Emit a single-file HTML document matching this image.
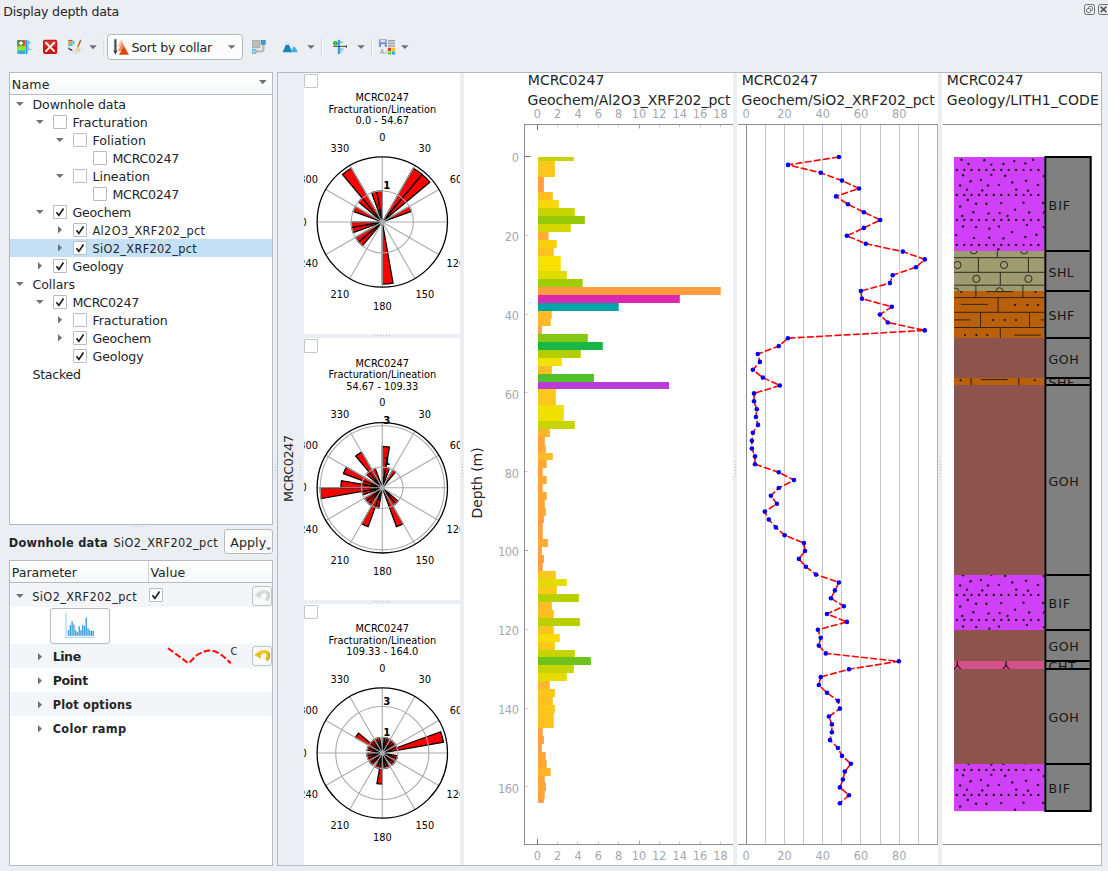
<!DOCTYPE html>
<html lang="en"><head><meta charset="utf-8"><title>Display depth data</title>
<style>
*{box-sizing:border-box;margin:0;padding:0}
html,body{width:1108px;height:871px;overflow:hidden;background:#ebeef3;}
body{position:relative;font-family:"DejaVu Sans Condensed","Liberation Sans",sans-serif;font-size:12.6px;color:#232629;}
.a{position:absolute;white-space:nowrap}
.t{position:absolute;white-space:nowrap;height:18px;line-height:18px}
.cb{position:absolute;width:14px;height:14px;background:#fff;border:1px solid #b9bdc1;border-radius:1px}
.b{font-weight:bold}
svg{position:absolute;overflow:hidden}
</style></head>
<body>
<div class="t " style="left:3.3px;top:2.5px;font-family:'DejaVu Sans','Liberation Sans',sans-serif;letter-spacing:-0.203px;">Display depth data</div>
<svg style="left:1082px;top:2px" width="26" height="15" viewBox="0 0 26 15">
<rect x="2.5" y="2.5" width="10" height="10" rx="2" fill="none" stroke="#726e6a" stroke-width="1"/>
<rect x="6.5" y="4.5" width="4" height="4" rx="1.2" fill="none" stroke="#726e6a" stroke-width="1"/>
<rect x="4.5" y="6.5" width="4" height="4" rx="1.2" fill="#eef0f4" stroke="#726e6a" stroke-width="1"/>
<rect x="16.5" y="2.5" width="10.5" height="10" rx="2" fill="none" stroke="#726e6a" stroke-width="1"/>
<path d="M18.7 4.7 L24.4 10.2 M24.4 4.7 L18.7 10.2" stroke="#5e5a56" stroke-width="1.7"/>
</svg>
<svg style="left:0;top:30px" width="420" height="34" viewBox="0 30 420 34">
<!-- icon1: add colour log -->
<g>
<rect x="17.3" y="39.9" width="8.2" height="14.1" rx="1.2" fill="#3fa6e0"/>
<rect x="17.3" y="39.9" width="8.2" height="7.2" rx="1" fill="#ee4a30"/>
<rect x="17.6" y="45.4" width="7.6" height="1.6" fill="#f8a828"/>
<rect x="17.3" y="46.9" width="8.2" height="3.5" fill="#7cf02c"/>
<rect x="18" y="40.5" width="5.9" height="5.3" rx="0.6" fill="#3f8f4c"/>
<path d="M20.95 41.2 V45.2 M19 43.2 H22.9" stroke="#fff" stroke-width="1.5"/>
<path d="M17.3 52 L20 54 H18.5 Q17.3 54 17.3 52.8 Z" fill="#5a9cc8"/>
<rect x="25.9" y="39.9" width="1.4" height="14.1" fill="#2c9ada"/>
<path d="M27.3 40.2 C29.5 40.6 30.8 42.2 30.6 43.8 L28.6 44 L28.4 45.9 L30 46.2 L28.6 46.8 L28.8 48.6 L32 49.4 L31.6 50 L28.6 49.8 L27.9 51.5 L27.3 53.5 Z" fill="#62b8ea" opacity="0.9"/>
</g>
<!-- icon2: red X -->
<rect x="43" y="39.8" width="14.2" height="14.2" rx="2" fill="#cc1111"/>
<rect x="44" y="40.8" width="12.2" height="6" rx="1.5" fill="#e04848" opacity="0.6"/>
<path d="M46 42.7 L54.2 51.1 M54.2 42.7 L46 51.1" stroke="#f2f2ee" stroke-width="2" stroke-linecap="round"/>
<!-- icon3: style brush -->
<g>
<rect x="68.2" y="39.9" width="4" height="1.7" fill="#ee3a3a"/>
<rect x="68.2" y="41.5" width="4" height="1.5" fill="#f4b020"/>
<rect x="68.2" y="42.9" width="4" height="1.6" fill="#70e038"/>
<rect x="68.2" y="44.4" width="4" height="1.4" fill="#3fa6e0"/>
<path d="M72.2 40 C74 40.4 75 41.4 75.2 42.4 L73.4 42.8 L75.4 44 L73.2 44.6 L72.2 45.8 Z" fill="#62b8ea" opacity="0.9"/>
<path d="M68.6 47.6 C68.8 49.4 70 49.8 71.6 49.8" fill="none" stroke="#4a4a4a" stroke-width="1.2"/>
<path d="M71 48.4 L72.8 49.9 L70.8 51" fill="#4a4a4a"/>
<ellipse cx="77.6" cy="50.9" rx="5.4" ry="2.3" fill="#f2f2ee" stroke="#cfcfc8" stroke-width="0.6" transform="rotate(-14 77.6 50.9)"/>
<circle cx="75.2" cy="51.8" r="0.7" fill="#e8a0a0"/><circle cx="77" cy="51.6" r="0.7" fill="#90d890"/><circle cx="79.4" cy="50.4" r="0.7" fill="#8090e8"/><circle cx="77.8" cy="49.8" r="0.6" fill="#f0d060"/>
<path d="M80.8 39.9 L77.7 47.2" stroke="#b8682c" stroke-width="1.5"/>
<path d="M78 46.6 L76.2 50.8 L78.6 47.8 Z" fill="#f4d860" stroke="#e0c050" stroke-width="0.5"/>
</g>
<path d="M89.2 45.3 H96.9 L93.05 49.2 Z" fill="#6e7276"/>
<rect x="103.4" y="38" width="1" height="18" fill="#d4d7da"/><rect x="104.4" y="38" width="1" height="18" fill="#fafbfc"/>
<!-- combobox -->
<rect x="107.5" y="34.5" width="135" height="25" rx="3" fill="#fcfcfc" stroke="#b3b7bb"/>
<path d="M115.4 39.2 V52" stroke="#4a4a4a" stroke-width="2.2"/><path d="M113.2 50.6 H117.6 L115.4 54.8 Z" fill="#444"/>
<path d="M121.5 38.9 L124.6 47 H117.3 Z" fill="#f6c4b0"/>
<path d="M122.4 42.6 L126.6 51 H118 Z" fill="#ee8860"/>
<path d="M124 46.4 L129 54.8 H118.9 Z" fill="#e24404"/>
<path d="M227.8 45.2 H235.4 L231.6 49 Z" fill="#6e7276"/>
<!-- link icon -->
<path d="M263.4 44 V49 Q263.4 51.4 261 51.4 H256" fill="none" stroke="#bababa" stroke-width="2.4"/>
<rect x="252.4" y="40.4" width="7.6" height="7.4" fill="#bcbcbc" stroke="#a4a4a4" stroke-width="0.8"/>
<rect x="261.4" y="40.4" width="3.8" height="3.8" fill="#4a9ed2" stroke="#2c84bc" stroke-width="0.8"/>
<rect x="252.4" y="49.4" width="3.5" height="4" fill="#a4d6f6" stroke="#54aae2" stroke-width="0.8"/>
<!-- mountains -->
<path d="M282.6 52.3 L287.3 41.2 L292.4 52.3 Z" fill="#1c84b8"/>
<path d="M290.4 52.3 L294.2 45 L297.8 52.3 Z" fill="#42b0e4"/>
<path d="M286 44.3 L287.3 41.2 L288.8 44.4 L288.1 45.2 L287.3 44.2 L286.6 45.2 Z" fill="#fff"/>
<path d="M293.4 46.6 L294.2 45 L295 46.8 L294.3 47.4 Z" fill="#fff"/>
<path d="M307.2 45.3 H314.8 L311 49.1 Z" fill="#6e7276"/>
<rect x="320.9" y="38.5" width="1" height="17.5" fill="#d4d7da"/><rect x="321.9" y="38.5" width="1" height="17.5" fill="#fafbfc"/>
<!-- depth tool -->
<rect x="337.8" y="39.8" width="2.2" height="14.3" fill="#3ea0dc"/>
<path d="M340 41 L343.5 42.2 L340 43.3 M340 48 L344 49.2 L340 50.3 M340 51 L342.5 51.8 L340 52.6" fill="#7cc4ee" stroke="#7cc4ee" stroke-width="0.5"/>
<circle cx="335.4" cy="43.3" r="2.3" fill="#22a822"/><ellipse cx="335.5" cy="43.3" rx="0.7" ry="1.1" fill="#8ce08c"/>
<path d="M333 46.4 H345.5" stroke="#3c3c3c" stroke-width="0.9"/><path d="M344.4 46.4 L346.9 44.9 V47.9 Z" fill="#3c3c3c"/>
<path d="M357.3 45.3 H364.9 L361.1 49.1 Z" fill="#6e7276"/>
<rect x="371" y="38.5" width="1" height="17.5" fill="#d4d7da"/><rect x="372" y="38.5" width="1" height="17.5" fill="#fafbfc"/>
<!-- save style icon -->
<rect x="379" y="39.3" width="7.8" height="7.8" rx="0.8" fill="#6f92c8"/>
<rect x="380.4" y="39.8" width="5" height="2.6" fill="#d8e2f2"/><rect x="381" y="44.2" width="3.8" height="2.9" fill="#e8ecf4"/>
<rect x="388" y="40" width="7" height="1.6" fill="#a0a0a0"/><rect x="388" y="42.6" width="7" height="1.6" fill="#a0a0a0"/><rect x="388" y="45.2" width="7" height="1.4" fill="#a0a0a0"/>
<text x="380" y="54" font-size="6.5" fill="#909090" font-family="Liberation Sans, sans-serif">A</text>
<rect x="384.8" y="52" width="1.6" height="1.4" fill="#a8a8a8"/>
<rect x="387.8" y="47.8" width="3.3" height="3.2" fill="#ee3030"/><rect x="391.8" y="47.8" width="3.3" height="3.2" fill="#f8c818"/>
<rect x="387.8" y="51.4" width="3.3" height="3.2" fill="#58e038"/><rect x="391.8" y="51.4" width="3.3" height="3.2" fill="#38a8ee"/>
<path d="M401 45.3 H408.6 L404.8 49.1 Z" fill="#6e7276"/>
</svg>
<div class="t " style="left:131.5px;top:39px;font-family:'DejaVu Sans','Liberation Sans',sans-serif;letter-spacing:-0.231px;">Sort by collar</div>
<div class="a" style="left:9px;top:72px;width:264px;height:453px;background:#fff;border:1px solid #b6babe"></div>
<div class="a" style="left:10px;top:73px;width:262px;height:22px;background:linear-gradient(#ffffff,#f6f7f8);border-bottom:1px solid #b6babe"></div>
<div class="t " style="left:11.8px;top:76.3px;font-family:'DejaVu Sans','Liberation Sans',sans-serif;letter-spacing:0.215px;">Name</div>
<svg style="left:258.8px;top:80.4px" width="8.6" height="5.2"><path d="M0 0 H7.6 L3.8 4.2 Z" fill="#6e7276"/></svg>
<div class="a" style="left:10px;top:239px;width:262px;height:18px;background:#c4e0f5"></div>
<svg style="left:16.2px;top:102.2px" width="8.6" height="5"><path d="M0 0 H7.6 L3.8 4 Z" fill="#6e7276"/></svg>
<div class="t " style="left:32.5px;top:96px;font-family:'DejaVu Sans','Liberation Sans',sans-serif;letter-spacing:-0.125px;">Downhole data</div>
<svg style="left:36.2px;top:120.2px" width="8.6" height="5"><path d="M0 0 H7.6 L3.8 4 Z" fill="#6e7276"/></svg>
<div class="cb" style="left:53px;top:115px"></div>
<div class="t " style="left:72.5px;top:114px;font-family:'DejaVu Sans','Liberation Sans',sans-serif;letter-spacing:-0.072px;">Fracturation</div>
<svg style="left:56.2px;top:138.2px" width="8.6" height="5"><path d="M0 0 H7.6 L3.8 4 Z" fill="#6e7276"/></svg>
<div class="cb" style="left:73px;top:133px"></div>
<div class="t " style="left:92.5px;top:132px;font-family:'DejaVu Sans','Liberation Sans',sans-serif;letter-spacing:0.007px;">Foliation</div>
<div class="cb" style="left:93px;top:151px"></div>
<div class="t " style="left:112.5px;top:150px;font-family:'DejaVu Sans','Liberation Sans',sans-serif;letter-spacing:-0.263px;">MCRC0247</div>
<svg style="left:56.2px;top:174.2px" width="8.6" height="5"><path d="M0 0 H7.6 L3.8 4 Z" fill="#6e7276"/></svg>
<div class="cb" style="left:73px;top:169px"></div>
<div class="t " style="left:92.5px;top:168px;font-family:'DejaVu Sans','Liberation Sans',sans-serif;letter-spacing:-0.062px;">Lineation</div>
<div class="cb" style="left:93px;top:187px"></div>
<div class="t " style="left:112.5px;top:186px;font-family:'DejaVu Sans','Liberation Sans',sans-serif;letter-spacing:-0.263px;">MCRC0247</div>
<svg style="left:36.2px;top:210.2px" width="8.6" height="5"><path d="M0 0 H7.6 L3.8 4 Z" fill="#6e7276"/></svg>
<div class="cb" style="left:53px;top:205px"></div>
<svg style="left:53px;top:205px" width="14" height="14" viewBox="0 0 14 14"><path d="M3.4 7.3 L5.9 10.4 L10.5 3.5" fill="none" stroke="#1b1e20" stroke-width="1.7"/></svg>
<div class="t " style="left:72.5px;top:204px;font-family:'DejaVu Sans','Liberation Sans',sans-serif;letter-spacing:-0.223px;">Geochem</div>
<svg style="left:58.2px;top:226.2px" width="5" height="8.6"><path d="M0 0 V7.6 L4 3.8 Z" fill="#6e7276"/></svg>
<div class="cb" style="left:73px;top:223px"></div>
<svg style="left:73px;top:223px" width="14" height="14" viewBox="0 0 14 14"><path d="M3.4 7.3 L5.9 10.4 L10.5 3.5" fill="none" stroke="#1b1e20" stroke-width="1.7"/></svg>
<div class="t " style="left:92.5px;top:222px;font-family:'DejaVu Sans Condensed','Liberation Sans',sans-serif;letter-spacing:0.353px;">Al2O3_XRF202_pct</div>
<svg style="left:58.2px;top:244.2px" width="5" height="8.6"><path d="M0 0 V7.6 L4 3.8 Z" fill="#6e7276"/></svg>
<div class="cb" style="left:73px;top:241px"></div>
<svg style="left:73px;top:241px" width="14" height="14" viewBox="0 0 14 14"><path d="M3.4 7.3 L5.9 10.4 L10.5 3.5" fill="none" stroke="#1b1e20" stroke-width="1.7"/></svg>
<div class="t " style="left:92.5px;top:240px;font-family:'DejaVu Sans Condensed','Liberation Sans',sans-serif;letter-spacing:0.34px;">SiO2_XRF202_pct</div>
<svg style="left:38.2px;top:262.2px" width="5" height="8.6"><path d="M0 0 V7.6 L4 3.8 Z" fill="#6e7276"/></svg>
<div class="cb" style="left:53px;top:259px"></div>
<svg style="left:53px;top:259px" width="14" height="14" viewBox="0 0 14 14"><path d="M3.4 7.3 L5.9 10.4 L10.5 3.5" fill="none" stroke="#1b1e20" stroke-width="1.7"/></svg>
<div class="t " style="left:72.5px;top:258px;font-family:'DejaVu Sans','Liberation Sans',sans-serif;letter-spacing:-0.112px;">Geology</div>
<svg style="left:16.2px;top:282.2px" width="8.6" height="5"><path d="M0 0 H7.6 L3.8 4 Z" fill="#6e7276"/></svg>
<div class="t " style="left:32.5px;top:276px;font-family:'DejaVu Sans','Liberation Sans',sans-serif;letter-spacing:-0.076px;">Collars</div>
<svg style="left:36.2px;top:300.2px" width="8.6" height="5"><path d="M0 0 H7.6 L3.8 4 Z" fill="#6e7276"/></svg>
<div class="cb" style="left:53px;top:295px"></div>
<svg style="left:53px;top:295px" width="14" height="14" viewBox="0 0 14 14"><path d="M3.4 7.3 L5.9 10.4 L10.5 3.5" fill="none" stroke="#1b1e20" stroke-width="1.7"/></svg>
<div class="t " style="left:72.5px;top:294px;font-family:'DejaVu Sans','Liberation Sans',sans-serif;letter-spacing:-0.263px;">MCRC0247</div>
<svg style="left:58.2px;top:316.2px" width="5" height="8.6"><path d="M0 0 V7.6 L4 3.8 Z" fill="#6e7276"/></svg>
<div class="cb" style="left:73px;top:313px"></div>
<div class="t " style="left:92.5px;top:312px;font-family:'DejaVu Sans','Liberation Sans',sans-serif;letter-spacing:-0.072px;">Fracturation</div>
<svg style="left:58.2px;top:334.2px" width="5" height="8.6"><path d="M0 0 V7.6 L4 3.8 Z" fill="#6e7276"/></svg>
<div class="cb" style="left:73px;top:331px"></div>
<svg style="left:73px;top:331px" width="14" height="14" viewBox="0 0 14 14"><path d="M3.4 7.3 L5.9 10.4 L10.5 3.5" fill="none" stroke="#1b1e20" stroke-width="1.7"/></svg>
<div class="t " style="left:92.5px;top:330px;font-family:'DejaVu Sans','Liberation Sans',sans-serif;letter-spacing:-0.223px;">Geochem</div>
<div class="cb" style="left:73px;top:349px"></div>
<svg style="left:73px;top:349px" width="14" height="14" viewBox="0 0 14 14"><path d="M3.4 7.3 L5.9 10.4 L10.5 3.5" fill="none" stroke="#1b1e20" stroke-width="1.7"/></svg>
<div class="t " style="left:92.5px;top:348px;font-family:'DejaVu Sans','Liberation Sans',sans-serif;letter-spacing:-0.112px;">Geology</div>
<div class="t " style="left:32.5px;top:366px;font-family:'DejaVu Sans','Liberation Sans',sans-serif;letter-spacing:-0.295px;">Stacked</div>
<div class="a" style="left:131px;top:526px;width:18px;height:1px;background:repeating-linear-gradient(90deg,#c2c5c8 0 1px,transparent 1px 3px)"></div>
<div class="t b" style="left:8.8px;top:534px;font-family:'DejaVu Sans Condensed','Liberation Sans',sans-serif;letter-spacing:0.249px;">Downhole data</div>
<div class="t " style="left:113.4px;top:534px;font-family:'DejaVu Sans Condensed','Liberation Sans',sans-serif;letter-spacing:0.347px;">SiO2_XRF202_pct</div>
<div class="a" style="left:224px;top:529px;width:49px;height:25px;background:#fcfcfc;border:1px solid #b6babe;border-radius:3px"></div>
<div class="t " style="left:230.2px;top:534px;font-family:'DejaVu Sans','Liberation Sans',sans-serif;letter-spacing:0.084px;">Apply</div>
<svg style="left:265px;top:546px" width="8" height="6"><path d="M1 1.5 H6.4 L3.7 4.4 Z" fill="#6e7276"/></svg>
<div class="a" style="left:9px;top:560px;width:264px;height:306px;background:#fff;border:1px solid #b6babe"></div>
<div class="a" style="left:10px;top:561px;width:262px;height:22px;background:linear-gradient(#ffffff,#f6f7f8);border-bottom:1px solid #b6babe"></div>
<div class="a" style="left:148px;top:561px;width:1px;height:21px;background:#d0d3d6"></div>
<div class="t " style="left:11.8px;top:564.3px;font-family:'DejaVu Sans','Liberation Sans',sans-serif;letter-spacing:-0.041px;">Parameter</div>
<div class="t " style="left:150.4px;top:564.3px;font-family:'DejaVu Sans','Liberation Sans',sans-serif;letter-spacing:0.052px;">Value</div>
<div class="a" style="left:10px;top:583px;width:262px;height:24px;background:#f4f5f8"></div>
<div class="a" style="left:10px;top:644px;width:262px;height:24px;background:#f4f5f8"></div>
<div class="a" style="left:10px;top:692px;width:262px;height:24px;background:#f4f5f8"></div>
<svg style="left:16.2px;top:594.4px" width="8.6" height="5"><path d="M0 0 H7.6 L3.8 4 Z" fill="#6e7276"/></svg>
<div class="t " style="left:32.3px;top:588px;font-family:'DejaVu Sans Condensed','Liberation Sans',sans-serif;letter-spacing:0.362px;">SiO2_XRF202_pct</div>
<div class="cb" style="left:149px;top:588px"></div>
<svg style="left:149px;top:588px" width="14" height="14" viewBox="0 0 14 14"><path d="M3.4 7.3 L5.9 10.4 L10.5 3.5" fill="none" stroke="#1b1e20" stroke-width="1.7"/></svg>
<div class="a" style="left:50px;top:608px;width:60px;height:36px;background:#fdfdfd;border:1px solid #b6babe;border-radius:3px"></div>
<svg style="left:64px;top:610px" width="34" height="32" viewBox="64 610 34 32"><rect x="65.6" y="613" width="0.8" height="25" fill="#7cc4ec"/><rect x="65.6" y="636.8" width="28.6" height="1.2" fill="#b4dcf4"/><rect x="67.90" y="630.1" width="1.35" height="5.7" fill="#3f9fd6"/><rect x="69.67" y="625.1" width="1.35" height="10.7" fill="#3f9fd6"/><rect x="71.44" y="621.3" width="1.35" height="14.5" fill="#3f9fd6"/><rect x="73.21" y="624.4" width="1.35" height="11.4" fill="#3f9fd6"/><rect x="74.98" y="630.1" width="1.35" height="5.7" fill="#3f9fd6"/><rect x="76.75" y="632.0" width="1.35" height="3.8" fill="#3f9fd6"/><rect x="78.52" y="626.3" width="1.35" height="9.5" fill="#3f9fd6"/><rect x="80.29" y="630.1" width="1.35" height="5.7" fill="#3f9fd6"/><rect x="82.06" y="625.1" width="1.35" height="10.7" fill="#3f9fd6"/><rect x="83.83" y="625.7" width="1.35" height="10.1" fill="#3f9fd6"/><rect x="85.60" y="617.5" width="1.35" height="18.3" fill="#3f9fd6"/><rect x="87.37" y="628.2" width="1.35" height="7.6" fill="#3f9fd6"/><rect x="89.14" y="630.1" width="1.35" height="5.7" fill="#3f9fd6"/><rect x="90.91" y="630.7" width="1.35" height="5.1" fill="#3f9fd6"/><rect x="92.68" y="630.7" width="1.35" height="5.1" fill="#3f9fd6"/></svg>
<svg style="left:38.2px;top:652.7px" width="5" height="8.6"><path d="M0 0 V7.6 L4 3.8 Z" fill="#6e7276"/></svg>
<div class="t b" style="left:52.7px;top:648px;font-family:'DejaVu Sans','Liberation Sans',sans-serif;letter-spacing:-0.453px;">Line</div>
<svg style="left:38.2px;top:676.7px" width="5" height="8.6"><path d="M0 0 V7.6 L4 3.8 Z" fill="#6e7276"/></svg>
<div class="t b" style="left:52.7px;top:672px;font-family:'DejaVu Sans','Liberation Sans',sans-serif;letter-spacing:-0.422px;">Point</div>
<svg style="left:38.2px;top:700.7px" width="5" height="8.6"><path d="M0 0 V7.6 L4 3.8 Z" fill="#6e7276"/></svg>
<div class="t b" style="left:52.7px;top:696px;font-family:'DejaVu Sans Condensed','Liberation Sans',sans-serif;letter-spacing:0.207px;">Plot options</div>
<svg style="left:38.2px;top:724.7px" width="5" height="8.6"><path d="M0 0 V7.6 L4 3.8 Z" fill="#6e7276"/></svg>
<div class="t b" style="left:52.7px;top:720px;font-family:'DejaVu Sans Condensed','Liberation Sans',sans-serif;letter-spacing:0.327px;">Color ramp</div>
<svg style="left:160px;top:644px" width="85" height="24" viewBox="160 644 85 24"><path d="M168 648.2 L188.6 663.4 L197 655 Q204 650.6 210 650.6 Q219 650.6 230.7 663.4" fill="none" stroke="#ff0000" stroke-width="2" stroke-dasharray="6.5 2.5"/></svg>
<div class="t " style="left:230.5px;top:642.8px;font-size:11px;">C</div>
<div class="a" style="left:252px;top:586px;width:20px;height:20px;background:#f8f9fa;border:1px solid #c0c3c6;border-radius:3px"></div>
<svg style="left:252px;top:586px" width="20" height="20" viewBox="0 0 20 20"><path d="M7.5 8.4 C9.5 4.6 16.3 4.2 16.2 9.4 C16.2 11.6 15.4 13 14.2 14.2" fill="none" stroke="#d8d8d4" stroke-width="3.6"/><path d="M2.2 9 L8.6 4.2 L9 12.8 Z" fill="#d8d8d4"/><path d="M15.6 14.2 C17.8 12 18.2 8.6 16.6 6.2" fill="none" stroke="#c4c4c0" stroke-width="1" opacity="0.8"/><path d="M7.6 7 C10 4 14.5 3.6 16 6" fill="none" stroke="#e8e8e4" stroke-width="1" opacity="0.9"/></svg>
<div class="a" style="left:252px;top:646px;width:20px;height:20px;background:#f8f9fa;border:1px solid #c0c3c6;border-radius:3px"></div>
<svg style="left:252px;top:646px" width="20" height="20" viewBox="0 0 20 20"><path d="M7.5 8.4 C9.5 4.6 16.3 4.2 16.2 9.4 C16.2 11.6 15.4 13 14.2 14.2" fill="none" stroke="#e8c020" stroke-width="3.6"/><path d="M2.2 9 L8.6 4.2 L9 12.8 Z" fill="#e8c020"/><path d="M15.6 14.2 C17.8 12 18.2 8.6 16.6 6.2" fill="none" stroke="#b08810" stroke-width="1" opacity="0.8"/><path d="M7.6 7 C10 4 14.5 3.6 16 6" fill="none" stroke="#f8e070" stroke-width="1" opacity="0.9"/></svg>
<div class="a" style="left:277px;top:72px;width:825px;height:794px;border:1px solid #b6babe;background:#ebeef3"></div>
<div class="a" style="left:304px;top:73px;width:156px;height:261px;background:#fff"></div><svg style="left:304px;top:73px" width="156" height="261" viewBox="304 73 156 261" font-family='"DejaVu Sans","Liberation Sans",sans-serif' font-size="9.8" fill="#000"><text x="382.3" y="100.8" text-anchor="middle">MCRC0247</text><text x="382.3" y="112.8" text-anchor="middle">Fracturation/Lineation</text><text x="382.3" y="123.9" text-anchor="middle">0.0 - 54.67</text><path d="M382.3 222 L413.35 168.22 A62.10 62.10 0 0 1 422.21 174.43 Z" fill="#ff0000" stroke="#000" stroke-width="1.25" stroke-linejoin="miter"/><path d="M382.3 222 L422.21 174.43 A62.10 62.10 0 0 1 429.87 182.09 Z" fill="#ff0000" stroke="#000" stroke-width="1.25" stroke-linejoin="miter"/><path d="M382.3 222 L409.19 206.48 A31.05 31.05 0 0 1 411.48 211.38 Z" fill="#ff0000" stroke="#000" stroke-width="1.25" stroke-linejoin="miter"/><path d="M382.3 222 L393.08 283.15 A62.10 62.10 0 0 1 382.30 284.10 Z" fill="#ff0000" stroke="#000" stroke-width="1.25" stroke-linejoin="miter"/><path d="M382.3 222 L362.34 245.78 A31.05 31.05 0 0 1 358.52 241.96 Z" fill="#ff0000" stroke="#000" stroke-width="1.25" stroke-linejoin="miter"/><path d="M382.3 222 L358.52 241.96 A31.05 31.05 0 0 1 355.41 237.52 Z" fill="#ff0000" stroke="#000" stroke-width="1.25" stroke-linejoin="miter"/><path d="M382.3 222 L353.12 232.62 A31.05 31.05 0 0 1 351.72 227.39 Z" fill="#ff0000" stroke="#000" stroke-width="1.25" stroke-linejoin="miter"/><path d="M382.3 222 L351.72 227.39 A31.05 31.05 0 0 1 351.25 222.00 Z" fill="#ff0000" stroke="#000" stroke-width="1.25" stroke-linejoin="miter"/><path d="M382.3 222 L353.12 211.38 A31.05 31.05 0 0 1 355.41 206.48 Z" fill="#ff0000" stroke="#000" stroke-width="1.25" stroke-linejoin="miter"/><path d="M382.3 222 L358.52 202.04 A31.05 31.05 0 0 1 362.34 198.22 Z" fill="#ff0000" stroke="#000" stroke-width="1.25" stroke-linejoin="miter"/><path d="M382.3 222 L342.39 174.43 A62.10 62.10 0 0 1 351.25 168.22 Z" fill="#ff0000" stroke="#000" stroke-width="1.25" stroke-linejoin="miter"/><path d="M382.3 222 L371.68 192.82 A31.05 31.05 0 0 1 376.91 191.42 Z" fill="#ff0000" stroke="#000" stroke-width="1.25" stroke-linejoin="miter"/><path d="M382.3 222 L376.91 191.42 A31.05 31.05 0 0 1 382.30 190.95 Z" fill="#ff0000" stroke="#000" stroke-width="1.25" stroke-linejoin="miter"/><path d="M382.3 222 L382.30 156.80 M382.3 222 L414.90 165.54 M382.3 222 L438.76 189.40 M382.3 222 L447.50 222.00 M382.3 222 L438.76 254.60 M382.3 222 L414.90 278.46 M382.3 222 L382.30 287.20 M382.3 222 L349.70 278.46 M382.3 222 L325.84 254.60 M382.3 222 L317.10 222.00 M382.3 222 L325.84 189.40 M382.3 222 L349.70 165.54 " stroke="#aaaaaa" stroke-width="1.1" fill="none"/><circle cx="382.3" cy="222" r="31.05" fill="none" stroke="#aaaaaa" stroke-width="1.1"/><circle cx="382.3" cy="222" r="65.2" fill="none" stroke="#000" stroke-width="1.3"/><text x="382.3" y="140.5" text-anchor="middle">0</text><text x="424.8" y="151.9" text-anchor="middle">30</text><text x="455.9" y="183.0" text-anchor="middle">60</text><text x="467.3" y="225.5" text-anchor="middle">90</text><text x="455.9" y="267.0" text-anchor="middle">120</text><text x="424.8" y="298.1" text-anchor="middle">150</text><text x="382.3" y="309.5" text-anchor="middle">180</text><text x="339.8" y="298.1" text-anchor="middle">210</text><text x="308.7" y="267.0" text-anchor="middle">240</text><text x="297.3" y="225.5" text-anchor="middle">270</text><text x="308.7" y="183.0" text-anchor="middle">300</text><text x="339.8" y="151.9" text-anchor="middle">330</text><text x="386.90000000000003" y="189.1" text-anchor="middle" font-weight="bold" font-size="10.2">1</text></svg><div class="cb" style="left:304px;top:74px;border-color:#c4c7ca"></div><div class="a" style="left:304px;top:338px;width:156px;height:262px;background:#fff"></div><svg style="left:304px;top:338px" width="156" height="262" viewBox="304 338 156 262" font-family='"DejaVu Sans","Liberation Sans",sans-serif' font-size="9.8" fill="#000"><text x="382.3" y="366.8" text-anchor="middle">MCRC0247</text><text x="382.3" y="377.9" text-anchor="middle">Fracturation/Lineation</text><text x="382.3" y="389.8" text-anchor="middle">54.67 - 109.33</text><path d="M382.3 487.8 L382.30 446.40 A41.40 41.40 0 0 1 389.49 447.03 Z" fill="#ff0000" stroke="#000" stroke-width="1.25" stroke-linejoin="miter"/><path d="M382.3 487.8 L385.89 467.42 A20.70 20.70 0 0 1 389.38 468.35 Z" fill="#ff0000" stroke="#000" stroke-width="1.25" stroke-linejoin="miter"/><path d="M382.3 487.8 L392.65 469.87 A20.70 20.70 0 0 1 395.60 471.94 Z" fill="#ff0000" stroke="#000" stroke-width="1.25" stroke-linejoin="miter"/><path d="M382.3 487.8 L398.16 501.10 A20.70 20.70 0 0 1 395.60 503.66 Z" fill="#ff0000" stroke="#000" stroke-width="1.25" stroke-linejoin="miter"/><path d="M382.3 487.8 L395.60 503.66 A20.70 20.70 0 0 1 392.65 505.73 Z" fill="#ff0000" stroke="#000" stroke-width="1.25" stroke-linejoin="miter"/><path d="M382.3 487.8 L403.00 523.65 A41.40 41.40 0 0 1 396.46 526.70 Z" fill="#ff0000" stroke="#000" stroke-width="1.25" stroke-linejoin="miter"/><path d="M382.3 487.8 L378.71 508.18 A20.70 20.70 0 0 1 375.22 507.25 Z" fill="#ff0000" stroke="#000" stroke-width="1.25" stroke-linejoin="miter"/><path d="M382.3 487.8 L368.14 526.70 A41.40 41.40 0 0 1 361.60 523.65 Z" fill="#ff0000" stroke="#000" stroke-width="1.25" stroke-linejoin="miter"/><path d="M382.3 487.8 L371.95 505.73 A20.70 20.70 0 0 1 369.00 503.66 Z" fill="#ff0000" stroke="#000" stroke-width="1.25" stroke-linejoin="miter"/><path d="M382.3 487.8 L369.00 503.66 A20.70 20.70 0 0 1 366.44 501.10 Z" fill="#ff0000" stroke="#000" stroke-width="1.25" stroke-linejoin="miter"/><path d="M382.3 487.8 L366.44 501.10 A20.70 20.70 0 0 1 364.37 498.15 Z" fill="#ff0000" stroke="#000" stroke-width="1.25" stroke-linejoin="miter"/><path d="M382.3 487.8 L362.85 494.88 A20.70 20.70 0 0 1 361.92 491.39 Z" fill="#ff0000" stroke="#000" stroke-width="1.25" stroke-linejoin="miter"/><path d="M382.3 487.8 L321.15 498.58 A62.10 62.10 0 0 1 320.20 487.80 Z" fill="#ff0000" stroke="#000" stroke-width="1.25" stroke-linejoin="miter"/><path d="M382.3 487.8 L340.90 487.80 A41.40 41.40 0 0 1 341.53 480.61 Z" fill="#ff0000" stroke="#000" stroke-width="1.25" stroke-linejoin="miter"/><path d="M382.3 487.8 L361.92 484.21 A20.70 20.70 0 0 1 362.85 480.72 Z" fill="#ff0000" stroke="#000" stroke-width="1.25" stroke-linejoin="miter"/><path d="M382.3 487.8 L343.40 473.64 A41.40 41.40 0 0 1 346.45 467.10 Z" fill="#ff0000" stroke="#000" stroke-width="1.25" stroke-linejoin="miter"/><path d="M382.3 487.8 L366.44 474.50 A20.70 20.70 0 0 1 369.00 471.94 Z" fill="#ff0000" stroke="#000" stroke-width="1.25" stroke-linejoin="miter"/><path d="M382.3 487.8 L355.69 456.09 A41.40 41.40 0 0 1 361.60 451.95 Z" fill="#ff0000" stroke="#000" stroke-width="1.25" stroke-linejoin="miter"/><path d="M382.3 487.8 L371.95 469.87 A20.70 20.70 0 0 1 375.22 468.35 Z" fill="#ff0000" stroke="#000" stroke-width="1.25" stroke-linejoin="miter"/><path d="M382.3 487.8 L382.30 422.60 M382.3 487.8 L414.90 431.34 M382.3 487.8 L438.76 455.20 M382.3 487.8 L447.50 487.80 M382.3 487.8 L438.76 520.40 M382.3 487.8 L414.90 544.26 M382.3 487.8 L382.30 553.00 M382.3 487.8 L349.70 544.26 M382.3 487.8 L325.84 520.40 M382.3 487.8 L317.10 487.80 M382.3 487.8 L325.84 455.20 M382.3 487.8 L349.70 431.34 " stroke="#aaaaaa" stroke-width="1.1" fill="none"/><circle cx="382.3" cy="487.8" r="20.70" fill="none" stroke="#aaaaaa" stroke-width="1.1"/><circle cx="382.3" cy="487.8" r="62.10" fill="none" stroke="#aaaaaa" stroke-width="1.1"/><circle cx="382.3" cy="487.8" r="65.2" fill="none" stroke="#000" stroke-width="1.3"/><text x="382.3" y="406.3" text-anchor="middle">0</text><text x="424.8" y="417.7" text-anchor="middle">30</text><text x="455.9" y="448.8" text-anchor="middle">60</text><text x="467.3" y="491.3" text-anchor="middle">90</text><text x="455.9" y="532.8" text-anchor="middle">120</text><text x="424.8" y="563.9" text-anchor="middle">150</text><text x="382.3" y="575.3" text-anchor="middle">180</text><text x="339.8" y="563.9" text-anchor="middle">210</text><text x="308.7" y="532.8" text-anchor="middle">240</text><text x="297.3" y="491.3" text-anchor="middle">270</text><text x="308.7" y="448.8" text-anchor="middle">300</text><text x="339.8" y="417.7" text-anchor="middle">330</text><text x="386.90000000000003" y="465.2" text-anchor="middle" font-weight="bold" font-size="10.2">1</text><text x="386.90000000000003" y="423.8" text-anchor="middle" font-weight="bold" font-size="10.2">3</text></svg><div class="cb" style="left:304px;top:339px;border-color:#c4c7ca"></div><div class="a" style="left:304px;top:604px;width:156px;height:261px;background:#fff"></div><svg style="left:304px;top:604px" width="156" height="261" viewBox="304 604 156 261" font-family='"DejaVu Sans","Liberation Sans",sans-serif' font-size="9.8" fill="#000"><text x="382.3" y="631.9" text-anchor="middle">MCRC0247</text><text x="382.3" y="643.9" text-anchor="middle">Fracturation/Lineation</text><text x="382.3" y="654.8" text-anchor="middle">109.33 - 164.0</text><path d="M382.3 753 L382.30 737.48 A15.52 15.52 0 0 1 385.00 737.71 Z" fill="#ff0000" stroke="#000" stroke-width="1.25" stroke-linejoin="miter"/><path d="M382.3 753 L385.00 737.71 A15.52 15.52 0 0 1 387.61 738.41 Z" fill="#ff0000" stroke="#000" stroke-width="1.25" stroke-linejoin="miter"/><path d="M382.3 753 L387.61 738.41 A15.52 15.52 0 0 1 390.06 739.56 Z" fill="#ff0000" stroke="#000" stroke-width="1.25" stroke-linejoin="miter"/><path d="M382.3 753 L390.06 739.56 A15.52 15.52 0 0 1 392.28 741.11 Z" fill="#ff0000" stroke="#000" stroke-width="1.25" stroke-linejoin="miter"/><path d="M382.3 753 L392.28 741.11 A15.52 15.52 0 0 1 394.19 743.02 Z" fill="#ff0000" stroke="#000" stroke-width="1.25" stroke-linejoin="miter"/><path d="M382.3 753 L394.19 743.02 A15.52 15.52 0 0 1 395.74 745.24 Z" fill="#ff0000" stroke="#000" stroke-width="1.25" stroke-linejoin="miter"/><path d="M382.3 753 L395.74 745.24 A15.52 15.52 0 0 1 396.89 747.69 Z" fill="#ff0000" stroke="#000" stroke-width="1.25" stroke-linejoin="miter"/><path d="M382.3 753 L440.65 731.76 A62.10 62.10 0 0 1 443.45 742.22 Z" fill="#ff0000" stroke="#000" stroke-width="1.25" stroke-linejoin="miter"/><path d="M382.3 753 L397.59 755.70 A15.52 15.52 0 0 1 396.89 758.31 Z" fill="#ff0000" stroke="#000" stroke-width="1.25" stroke-linejoin="miter"/><path d="M382.3 753 L396.89 758.31 A15.52 15.52 0 0 1 395.74 760.76 Z" fill="#ff0000" stroke="#000" stroke-width="1.25" stroke-linejoin="miter"/><path d="M382.3 753 L395.74 760.76 A15.52 15.52 0 0 1 394.19 762.98 Z" fill="#ff0000" stroke="#000" stroke-width="1.25" stroke-linejoin="miter"/><path d="M382.3 753 L394.19 762.98 A15.52 15.52 0 0 1 392.28 764.89 Z" fill="#ff0000" stroke="#000" stroke-width="1.25" stroke-linejoin="miter"/><path d="M382.3 753 L390.06 766.44 A15.52 15.52 0 0 1 387.61 767.59 Z" fill="#ff0000" stroke="#000" stroke-width="1.25" stroke-linejoin="miter"/><path d="M382.3 753 L387.61 767.59 A15.52 15.52 0 0 1 385.00 768.29 Z" fill="#ff0000" stroke="#000" stroke-width="1.25" stroke-linejoin="miter"/><path d="M382.3 753 L385.00 768.29 A15.52 15.52 0 0 1 382.30 768.52 Z" fill="#ff0000" stroke="#000" stroke-width="1.25" stroke-linejoin="miter"/><path d="M382.3 753 L382.30 784.05 A31.05 31.05 0 0 1 376.91 783.58 Z" fill="#ff0000" stroke="#000" stroke-width="1.25" stroke-linejoin="miter"/><path d="M382.3 753 L379.60 768.29 A15.52 15.52 0 0 1 376.99 767.59 Z" fill="#ff0000" stroke="#000" stroke-width="1.25" stroke-linejoin="miter"/><path d="M382.3 753 L376.99 767.59 A15.52 15.52 0 0 1 374.54 766.44 Z" fill="#ff0000" stroke="#000" stroke-width="1.25" stroke-linejoin="miter"/><path d="M382.3 753 L372.32 764.89 A15.52 15.52 0 0 1 370.41 762.98 Z" fill="#ff0000" stroke="#000" stroke-width="1.25" stroke-linejoin="miter"/><path d="M382.3 753 L370.41 762.98 A15.52 15.52 0 0 1 368.86 760.76 Z" fill="#ff0000" stroke="#000" stroke-width="1.25" stroke-linejoin="miter"/><path d="M382.3 753 L368.86 760.76 A15.52 15.52 0 0 1 367.71 758.31 Z" fill="#ff0000" stroke="#000" stroke-width="1.25" stroke-linejoin="miter"/><path d="M382.3 753 L367.71 758.31 A15.52 15.52 0 0 1 367.01 755.70 Z" fill="#ff0000" stroke="#000" stroke-width="1.25" stroke-linejoin="miter"/><path d="M382.3 753 L367.01 755.70 A15.52 15.52 0 0 1 366.78 753.00 Z" fill="#ff0000" stroke="#000" stroke-width="1.25" stroke-linejoin="miter"/><path d="M382.3 753 L367.01 750.30 A15.52 15.52 0 0 1 367.71 747.69 Z" fill="#ff0000" stroke="#000" stroke-width="1.25" stroke-linejoin="miter"/><path d="M382.3 753 L367.71 747.69 A15.52 15.52 0 0 1 368.86 745.24 Z" fill="#ff0000" stroke="#000" stroke-width="1.25" stroke-linejoin="miter"/><path d="M382.3 753 L355.41 737.48 A31.05 31.05 0 0 1 358.52 733.04 Z" fill="#ff0000" stroke="#000" stroke-width="1.25" stroke-linejoin="miter"/><path d="M382.3 753 L370.41 743.02 A15.52 15.52 0 0 1 372.32 741.11 Z" fill="#ff0000" stroke="#000" stroke-width="1.25" stroke-linejoin="miter"/><path d="M382.3 753 L372.32 741.11 A15.52 15.52 0 0 1 374.54 739.56 Z" fill="#ff0000" stroke="#000" stroke-width="1.25" stroke-linejoin="miter"/><path d="M382.3 753 L374.54 739.56 A15.52 15.52 0 0 1 376.99 738.41 Z" fill="#ff0000" stroke="#000" stroke-width="1.25" stroke-linejoin="miter"/><path d="M382.3 753 L376.99 738.41 A15.52 15.52 0 0 1 379.60 737.71 Z" fill="#ff0000" stroke="#000" stroke-width="1.25" stroke-linejoin="miter"/><path d="M382.3 753 L382.30 687.80 M382.3 753 L414.90 696.54 M382.3 753 L438.76 720.40 M382.3 753 L447.50 753.00 M382.3 753 L438.76 785.60 M382.3 753 L414.90 809.46 M382.3 753 L382.30 818.20 M382.3 753 L349.70 809.46 M382.3 753 L325.84 785.60 M382.3 753 L317.10 753.00 M382.3 753 L325.84 720.40 M382.3 753 L349.70 696.54 " stroke="#aaaaaa" stroke-width="1.1" fill="none"/><circle cx="382.3" cy="753" r="15.52" fill="none" stroke="#aaaaaa" stroke-width="1.1"/><circle cx="382.3" cy="753" r="46.57" fill="none" stroke="#aaaaaa" stroke-width="1.1"/><circle cx="382.3" cy="753" r="65.2" fill="none" stroke="#000" stroke-width="1.3"/><text x="382.3" y="671.5" text-anchor="middle">0</text><text x="424.8" y="682.9" text-anchor="middle">30</text><text x="455.9" y="714.0" text-anchor="middle">60</text><text x="467.3" y="756.5" text-anchor="middle">90</text><text x="455.9" y="798.0" text-anchor="middle">120</text><text x="424.8" y="829.1" text-anchor="middle">150</text><text x="382.3" y="840.5" text-anchor="middle">180</text><text x="339.8" y="829.1" text-anchor="middle">210</text><text x="308.7" y="798.0" text-anchor="middle">240</text><text x="297.3" y="756.5" text-anchor="middle">270</text><text x="308.7" y="714.0" text-anchor="middle">300</text><text x="339.8" y="682.9" text-anchor="middle">330</text><text x="386.90000000000003" y="735.6" text-anchor="middle" font-weight="bold" font-size="10.2">1</text><text x="386.90000000000003" y="704.5" text-anchor="middle" font-weight="bold" font-size="10.2">3</text></svg><div class="cb" style="left:304px;top:605px;border-color:#c4c7ca"></div><div class="a" style="left:278px;top:73px;width:26px;height:792px;background:#ebeef3"></div><svg style="left:278px;top:400px" width="26" height="140" viewBox="278 400 26 140"><text transform="translate(292.5 468.5) rotate(-90)" text-anchor="middle" font-size="12.6" fill="#232629" style="font-family:'DejaVu Sans','Liberation Sans',sans-serif;letter-spacing:-0.234px">MCRC0247</text></svg><div class="a" style="left:275px;top:461px;width:1px;height:18px;background:repeating-linear-gradient(180deg,#bfc3c7 0 1px,transparent 1px 3px)"></div><div class="a" style="left:300px;top:461px;width:1px;height:18px;background:repeating-linear-gradient(180deg,#bfc3c7 0 1px,transparent 1px 3px)"></div><div class="a" style="left:462px;top:461px;width:1px;height:18px;background:repeating-linear-gradient(180deg,#bfc3c7 0 1px,transparent 1px 3px)"></div><div class="a" style="left:735px;top:461px;width:1px;height:18px;background:repeating-linear-gradient(180deg,#bfc3c7 0 1px,transparent 1px 3px)"></div><div class="a" style="left:940px;top:461px;width:1px;height:18px;background:repeating-linear-gradient(180deg,#bfc3c7 0 1px,transparent 1px 3px)"></div><div class="a" style="left:374px;top:335px;width:18px;height:1px;background:repeating-linear-gradient(90deg,#bfc3c7 0 1px,transparent 1px 3px)"></div><div class="a" style="left:374px;top:601px;width:18px;height:1px;background:repeating-linear-gradient(90deg,#bfc3c7 0 1px,transparent 1px 3px)"></div><div class="a" style="left:464px;top:73px;width:269px;height:792px;background:#fff"></div><svg style="left:464px;top:73px" width="269" height="792" viewBox="464 73 269 792" font-family='"DejaVu Sans Condensed","Liberation Sans",sans-serif'><rect x="538" y="157" width="35.8" height="4" fill="#c8d400"/><rect x="538" y="161" width="16.9" height="8" fill="#f9c81a"/><rect x="538" y="169" width="16.9" height="8" fill="#f9c81a"/><rect x="538" y="177" width="5.9" height="8" fill="#ffa040"/><rect x="538" y="185" width="5.9" height="7" fill="#ffa040"/><rect x="538" y="192" width="14.8" height="8" fill="#fbc01e"/><rect x="538" y="200" width="20.8" height="8" fill="#f8d80a"/><rect x="538" y="208" width="36.8" height="8" fill="#c8d400"/><rect x="538" y="216" width="46.8" height="8" fill="#96c80a"/><rect x="538" y="224" width="32.8" height="8" fill="#d4d800"/><rect x="538" y="232" width="10.6" height="8" fill="#fdb030"/><rect x="538" y="240" width="18.8" height="8" fill="#f8d010"/><rect x="538" y="248" width="15.7" height="8" fill="#fac41c"/><rect x="538" y="256" width="22.7" height="7" fill="#f8e000"/><rect x="538" y="263" width="22.7" height="8" fill="#f8e000"/><rect x="538" y="271" width="28.8" height="8" fill="#e0dc00"/><rect x="538" y="279" width="44.7" height="8" fill="#a0cc08"/><rect x="538" y="287" width="182.7" height="8" fill="#ff9c40"/><rect x="538" y="295" width="141.8" height="8" fill="#dc28b0"/><rect x="538" y="303" width="80.7" height="8" fill="#00a4a8"/><rect x="538" y="311" width="13.8" height="8" fill="#fbbc24"/><rect x="538" y="319" width="12.7" height="7" fill="#fbb828"/><rect x="538" y="326" width="3.8" height="8" fill="#ffa040"/><rect x="538" y="334" width="49.8" height="8" fill="#84c814"/><rect x="538" y="342" width="64.8" height="8" fill="#18b848"/><rect x="538" y="350" width="42.8" height="8" fill="#b4cc00"/><rect x="538" y="358" width="23.9" height="8" fill="#f4e000"/><rect x="538" y="366" width="13.8" height="8" fill="#fbbc24"/><rect x="538" y="374" width="55.9" height="8" fill="#50c028"/><rect x="538" y="382" width="131" height="7" fill="#b83cd8"/><rect x="538" y="389" width="17.8" height="8" fill="#f9c81a"/><rect x="538" y="397" width="17.8" height="8" fill="#f9c81a"/><rect x="538" y="405" width="25.8" height="8" fill="#f0e000"/><rect x="538" y="413" width="25.8" height="8" fill="#f0e000"/><rect x="538" y="421" width="36.8" height="8" fill="#c8d400"/><rect x="538" y="429" width="11.8" height="8" fill="#fcb42c"/><rect x="538" y="437" width="6.8" height="8" fill="#ffa43c"/><rect x="538" y="445" width="7.8" height="8" fill="#ffa838"/><rect x="538" y="453" width="14.8" height="7" fill="#fbbc24"/><rect x="538" y="460" width="8.7" height="8" fill="#fea838"/><rect x="538" y="468" width="4.7" height="8" fill="#ffa040"/><rect x="538" y="476" width="8.7" height="8" fill="#fea838"/><rect x="538" y="484" width="4.7" height="8" fill="#ffa040"/><rect x="538" y="492" width="8.7" height="8" fill="#fea838"/><rect x="538" y="500" width="6.8" height="8" fill="#ffa43c"/><rect x="538" y="508" width="7.8" height="8" fill="#ffa838"/><rect x="538" y="516" width="5.9" height="7" fill="#ffa040"/><rect x="538" y="523" width="4.7" height="8" fill="#ffa040"/><rect x="538" y="531" width="4.7" height="8" fill="#ffa040"/><rect x="538" y="539" width="9.9" height="8" fill="#fdac34"/><rect x="538" y="547" width="3.8" height="8" fill="#ffa040"/><rect x="538" y="555" width="5.9" height="8" fill="#ffa040"/><rect x="538" y="563" width="4.7" height="8" fill="#ffa040"/><rect x="538" y="571" width="17.8" height="8" fill="#f9c81a"/><rect x="538" y="579" width="28.8" height="7" fill="#e4dc00"/><rect x="538" y="586" width="18.8" height="8" fill="#f8cc14"/><rect x="538" y="594" width="40.9" height="8" fill="#b8d000"/><rect x="538" y="602" width="13.8" height="8" fill="#fbbc24"/><rect x="538" y="610" width="15.7" height="8" fill="#fac01e"/><rect x="538" y="618" width="41.9" height="8" fill="#b8d000"/><rect x="538" y="626" width="15.7" height="8" fill="#fac41c"/><rect x="538" y="634" width="21.8" height="8" fill="#f8dc08"/><rect x="538" y="642" width="16.9" height="8" fill="#f9c81a"/><rect x="538" y="650" width="36.8" height="7" fill="#c8d400"/><rect x="538" y="657" width="52.9" height="8" fill="#6cc41c"/><rect x="538" y="665" width="35.8" height="8" fill="#c8d400"/><rect x="538" y="673" width="28.8" height="8" fill="#e4dc00"/><rect x="538" y="681" width="11.8" height="8" fill="#fcb82c"/><rect x="538" y="689" width="16.9" height="8" fill="#f9c81a"/><rect x="538" y="697" width="14.8" height="8" fill="#fac01e"/><rect x="538" y="705" width="16.9" height="8" fill="#f9c81a"/><rect x="538" y="713" width="15.7" height="7" fill="#fac41c"/><rect x="538" y="720" width="15.7" height="8" fill="#fac41c"/><rect x="538" y="728" width="4.7" height="8" fill="#ffa040"/><rect x="538" y="736" width="5.9" height="8" fill="#ffa040"/><rect x="538" y="744" width="3.8" height="8" fill="#ffa040"/><rect x="538" y="752" width="7.8" height="8" fill="#ffa838"/><rect x="538" y="760" width="8.7" height="8" fill="#fea838"/><rect x="538" y="768" width="12.7" height="8" fill="#fcb42c"/><rect x="538" y="776" width="6.8" height="7" fill="#ffa43c"/><rect x="538" y="783" width="8.0" height="8" fill="#fea83a"/><rect x="538" y="791" width="6.8" height="8" fill="#ffa43c"/><rect x="538" y="799" width="5.9" height="4" fill="#ffa040"/><rect x="524" y="124" width="1" height="721" fill="#8a8d90"/><rect x="524" y="124" width="209" height="1" fill="#8a8d90"/><rect x="524" y="844" width="209" height="1" fill="#8a8d90"/><rect x="537" y="125" width="1" height="5" fill="#707376"/><rect x="537" y="839" width="1" height="5" fill="#707376"/><text x="537.3" y="118.3" text-anchor="middle" font-size="12.6" fill="#a3a8ae">0</text><text x="537.3" y="859.8" text-anchor="middle" font-size="12.6" fill="#a3a8ae">0</text><rect x="557" y="125" width="1" height="2.5" fill="#c9cbcd"/><rect x="557" y="841.5" width="1" height="2.5" fill="#c9cbcd"/><text x="557.6" y="118.3" text-anchor="middle" font-size="12.6" fill="#a3a8ae">2</text><text x="557.6" y="859.8" text-anchor="middle" font-size="12.6" fill="#a3a8ae">2</text><rect x="577" y="125" width="1" height="2.5" fill="#c9cbcd"/><rect x="577" y="841.5" width="1" height="2.5" fill="#c9cbcd"/><text x="578.0" y="118.3" text-anchor="middle" font-size="12.6" fill="#a3a8ae">4</text><text x="578.0" y="859.8" text-anchor="middle" font-size="12.6" fill="#a3a8ae">4</text><rect x="598" y="125" width="1" height="2.5" fill="#c9cbcd"/><rect x="598" y="841.5" width="1" height="2.5" fill="#c9cbcd"/><text x="598.3" y="118.3" text-anchor="middle" font-size="12.6" fill="#a3a8ae">6</text><text x="598.3" y="859.8" text-anchor="middle" font-size="12.6" fill="#a3a8ae">6</text><rect x="618" y="125" width="1" height="2.5" fill="#c9cbcd"/><rect x="618" y="841.5" width="1" height="2.5" fill="#c9cbcd"/><text x="618.7" y="118.3" text-anchor="middle" font-size="12.6" fill="#a3a8ae">8</text><text x="618.7" y="859.8" text-anchor="middle" font-size="12.6" fill="#a3a8ae">8</text><rect x="639" y="125" width="1" height="3.5" fill="#a2a5a8"/><rect x="639" y="840.5" width="1" height="3.5" fill="#a2a5a8"/><text x="639.0" y="118.3" text-anchor="middle" font-size="12.6" fill="#a3a8ae">10</text><text x="639.0" y="859.8" text-anchor="middle" font-size="12.6" fill="#a3a8ae">10</text><rect x="659" y="125" width="1" height="2.5" fill="#c9cbcd"/><rect x="659" y="841.5" width="1" height="2.5" fill="#c9cbcd"/><text x="659.3" y="118.3" text-anchor="middle" font-size="12.6" fill="#a3a8ae">12</text><text x="659.3" y="859.8" text-anchor="middle" font-size="12.6" fill="#a3a8ae">12</text><rect x="679" y="125" width="1" height="2.5" fill="#c9cbcd"/><rect x="679" y="841.5" width="1" height="2.5" fill="#c9cbcd"/><text x="679.7" y="118.3" text-anchor="middle" font-size="12.6" fill="#a3a8ae">14</text><text x="679.7" y="859.8" text-anchor="middle" font-size="12.6" fill="#a3a8ae">14</text><rect x="700" y="125" width="1" height="2.5" fill="#c9cbcd"/><rect x="700" y="841.5" width="1" height="2.5" fill="#c9cbcd"/><text x="700.0" y="118.3" text-anchor="middle" font-size="12.6" fill="#a3a8ae">16</text><text x="700.0" y="859.8" text-anchor="middle" font-size="12.6" fill="#a3a8ae">16</text><rect x="720" y="125" width="1" height="2.5" fill="#c9cbcd"/><rect x="720" y="841.5" width="1" height="2.5" fill="#c9cbcd"/><text x="720.4" y="118.3" text-anchor="middle" font-size="12.6" fill="#a3a8ae">18</text><text x="720.4" y="859.8" text-anchor="middle" font-size="12.6" fill="#a3a8ae">18</text><rect x="525" y="156" width="5.5" height="1" fill="#707376"/><text x="518.7" y="162.3" text-anchor="end" font-size="12.6" fill="#a3a8ae" style="letter-spacing:-0.3px">0</text><rect x="525" y="235" width="2.5" height="1" fill="#c4c6c8"/><text x="518.7" y="241.1" text-anchor="end" font-size="12.6" fill="#a3a8ae" style="letter-spacing:-0.3px">20</text><rect x="525" y="314" width="2.5" height="1" fill="#c4c6c8"/><text x="518.7" y="319.9" text-anchor="end" font-size="12.6" fill="#a3a8ae" style="letter-spacing:-0.3px">40</text><rect x="525" y="392" width="2.5" height="1" fill="#c4c6c8"/><text x="518.7" y="398.7" text-anchor="end" font-size="12.6" fill="#a3a8ae" style="letter-spacing:-0.3px">60</text><rect x="525" y="471" width="2.5" height="1" fill="#c4c6c8"/><text x="518.7" y="477.5" text-anchor="end" font-size="12.6" fill="#a3a8ae" style="letter-spacing:-0.3px">80</text><rect x="525" y="550" width="3" height="1" fill="#a8abae"/><text x="518.7" y="556.3" text-anchor="end" font-size="12.6" fill="#a3a8ae" style="letter-spacing:-0.3px">100</text><rect x="525" y="629" width="2.5" height="1" fill="#c4c6c8"/><text x="518.7" y="635.1" text-anchor="end" font-size="12.6" fill="#a3a8ae" style="letter-spacing:-0.3px">120</text><rect x="525" y="708" width="2.5" height="1" fill="#c4c6c8"/><text x="518.7" y="713.9" text-anchor="end" font-size="12.6" fill="#a3a8ae" style="letter-spacing:-0.3px">140</text><rect x="525" y="786" width="2.5" height="1" fill="#c4c6c8"/><text x="518.7" y="792.7" text-anchor="end" font-size="12.6" fill="#a3a8ae" style="letter-spacing:-0.3px">160</text><text x="527.8" y="84.8" font-size="14" fill="#232629" style="font-family:'DejaVu Sans','Liberation Sans',sans-serif;letter-spacing:0.029px">MCRC0247</text><text x="527.6" y="104.7" font-size="14" fill="#232629" style="font-family:'DejaVu Sans','Liberation Sans',sans-serif;letter-spacing:-0.054px">Geochem/Al2O3_XRF202_pct</text><text transform="translate(481.5 483) rotate(-90)" text-anchor="middle" font-size="14" fill="#232629" style="font-family:'DejaVu Sans','Liberation Sans',sans-serif;letter-spacing:-0.057px">Depth (m)</text></svg><div class="a" style="left:737px;top:73px;width:201px;height:792px;background:#fff"></div><svg style="left:737px;top:73px" width="201" height="792" viewBox="737 73 201 792" font-family='"DejaVu Sans Condensed","Liberation Sans",sans-serif'><rect x="746" y="125" width="1" height="720" fill="#8a8d90"/><rect x="765" y="125" width="1" height="720" fill="#c6c8ca"/><rect x="784" y="125" width="1" height="720" fill="#c6c8ca"/><rect x="803" y="125" width="1" height="720" fill="#c6c8ca"/><rect x="822" y="125" width="1" height="720" fill="#c6c8ca"/><rect x="841" y="125" width="1" height="720" fill="#c6c8ca"/><rect x="860" y="125" width="1" height="720" fill="#c6c8ca"/><rect x="880" y="125" width="1" height="720" fill="#c6c8ca"/><rect x="899" y="125" width="1" height="720" fill="#c6c8ca"/><rect x="918" y="125" width="1" height="720" fill="#c6c8ca"/><rect x="937" y="125" width="1" height="720" fill="#b0b3b6"/><rect x="738" y="124" width="200" height="1" fill="#8a8d90"/><rect x="738" y="844" width="200" height="1" fill="#8a8d90"/><text x="746.2" y="118.3" text-anchor="middle" font-size="12.6" fill="#a3a8ae">0</text><text x="746.2" y="859.8" text-anchor="middle" font-size="12.6" fill="#a3a8ae">0</text><text x="784.5" y="118.3" text-anchor="middle" font-size="12.6" fill="#a3a8ae">20</text><text x="784.5" y="859.8" text-anchor="middle" font-size="12.6" fill="#a3a8ae">20</text><text x="822.7" y="118.3" text-anchor="middle" font-size="12.6" fill="#a3a8ae">40</text><text x="822.7" y="859.8" text-anchor="middle" font-size="12.6" fill="#a3a8ae">40</text><text x="861.0" y="118.3" text-anchor="middle" font-size="12.6" fill="#a3a8ae">60</text><text x="861.0" y="859.8" text-anchor="middle" font-size="12.6" fill="#a3a8ae">60</text><text x="899.2" y="118.3" text-anchor="middle" font-size="12.6" fill="#a3a8ae">80</text><text x="899.2" y="859.8" text-anchor="middle" font-size="12.6" fill="#a3a8ae">80</text><polyline points="838.9,157.0 788.1,164.9 820.7,172.8 842.0,180.6 859.0,188.5 836.1,196.4 848.0,204.3 863.9,212.2 880.2,220.0 863.9,227.9 846.9,235.8 865.8,243.7 902.8,251.6 924.8,259.4 915.9,267.3 892.7,275.2 889.9,283.1 860.9,291.0 862.0,298.8 891.8,306.7 879.9,314.6 887.8,322.5 924.8,330.4 787.9,338.2 778.8,346.1 757.8,354.0 759.9,361.9 752.9,369.8 762.9,377.6 779.8,385.5 754.0,393.4 754.0,401.3 756.8,409.2 755.9,417.0 758.0,424.9 752.9,432.8 751.9,440.7 751.9,448.6 755.0,456.4 755.0,464.3 778.8,472.2 794.0,480.1 778.8,488.0 770.9,495.8 776.9,503.7 764.8,511.6 768.8,519.5 775.8,527.4 784.7,535.2 803.9,543.1 805.0,551.0 798.9,558.9 805.9,566.8 816.0,574.6 838.9,582.5 834.9,590.4 831.0,598.3 843.8,606.2 827.0,614.0 846.9,621.9 817.9,629.8 820.7,637.7 818.8,645.6 825.8,653.4 898.8,661.3 849.0,669.2 820.7,677.1 818.8,685.0 827.0,692.8 838.0,700.7 839.9,708.6 828.9,716.5 831.9,724.4 831.9,732.2 830.0,740.1 838.0,748.0 842.0,755.9 850.9,763.8 844.8,771.6 842.9,779.5 839.9,787.4 849.0,795.3 839.9,803.2" fill="none" stroke="#ff0000" stroke-width="1.6" stroke-dasharray="7 2.2"/><circle cx="838.9" cy="157.0" r="2.3" fill="#0000f4"/><circle cx="788.1" cy="164.9" r="2.3" fill="#0000f4"/><circle cx="820.7" cy="172.8" r="2.3" fill="#0000f4"/><circle cx="842.0" cy="180.6" r="2.3" fill="#0000f4"/><circle cx="859.0" cy="188.5" r="2.3" fill="#0000f4"/><circle cx="836.1" cy="196.4" r="2.3" fill="#0000f4"/><circle cx="848.0" cy="204.3" r="2.3" fill="#0000f4"/><circle cx="863.9" cy="212.2" r="2.3" fill="#0000f4"/><circle cx="880.2" cy="220.0" r="2.3" fill="#0000f4"/><circle cx="863.9" cy="227.9" r="2.3" fill="#0000f4"/><circle cx="846.9" cy="235.8" r="2.3" fill="#0000f4"/><circle cx="865.8" cy="243.7" r="2.3" fill="#0000f4"/><circle cx="902.8" cy="251.6" r="2.3" fill="#0000f4"/><circle cx="924.8" cy="259.4" r="2.3" fill="#0000f4"/><circle cx="915.9" cy="267.3" r="2.3" fill="#0000f4"/><circle cx="892.7" cy="275.2" r="2.3" fill="#0000f4"/><circle cx="889.9" cy="283.1" r="2.3" fill="#0000f4"/><circle cx="860.9" cy="291.0" r="2.3" fill="#0000f4"/><circle cx="862.0" cy="298.8" r="2.3" fill="#0000f4"/><circle cx="891.8" cy="306.7" r="2.3" fill="#0000f4"/><circle cx="879.9" cy="314.6" r="2.3" fill="#0000f4"/><circle cx="887.8" cy="322.5" r="2.3" fill="#0000f4"/><circle cx="924.8" cy="330.4" r="2.3" fill="#0000f4"/><circle cx="787.9" cy="338.2" r="2.3" fill="#0000f4"/><circle cx="778.8" cy="346.1" r="2.3" fill="#0000f4"/><circle cx="757.8" cy="354.0" r="2.3" fill="#0000f4"/><circle cx="759.9" cy="361.9" r="2.3" fill="#0000f4"/><circle cx="752.9" cy="369.8" r="2.3" fill="#0000f4"/><circle cx="762.9" cy="377.6" r="2.3" fill="#0000f4"/><circle cx="779.8" cy="385.5" r="2.3" fill="#0000f4"/><circle cx="754.0" cy="393.4" r="2.3" fill="#0000f4"/><circle cx="754.0" cy="401.3" r="2.3" fill="#0000f4"/><circle cx="756.8" cy="409.2" r="2.3" fill="#0000f4"/><circle cx="755.9" cy="417.0" r="2.3" fill="#0000f4"/><circle cx="758.0" cy="424.9" r="2.3" fill="#0000f4"/><circle cx="752.9" cy="432.8" r="2.3" fill="#0000f4"/><circle cx="751.9" cy="440.7" r="2.3" fill="#0000f4"/><circle cx="751.9" cy="448.6" r="2.3" fill="#0000f4"/><circle cx="755.0" cy="456.4" r="2.3" fill="#0000f4"/><circle cx="755.0" cy="464.3" r="2.3" fill="#0000f4"/><circle cx="778.8" cy="472.2" r="2.3" fill="#0000f4"/><circle cx="794.0" cy="480.1" r="2.3" fill="#0000f4"/><circle cx="778.8" cy="488.0" r="2.3" fill="#0000f4"/><circle cx="770.9" cy="495.8" r="2.3" fill="#0000f4"/><circle cx="776.9" cy="503.7" r="2.3" fill="#0000f4"/><circle cx="764.8" cy="511.6" r="2.3" fill="#0000f4"/><circle cx="768.8" cy="519.5" r="2.3" fill="#0000f4"/><circle cx="775.8" cy="527.4" r="2.3" fill="#0000f4"/><circle cx="784.7" cy="535.2" r="2.3" fill="#0000f4"/><circle cx="803.9" cy="543.1" r="2.3" fill="#0000f4"/><circle cx="805.0" cy="551.0" r="2.3" fill="#0000f4"/><circle cx="798.9" cy="558.9" r="2.3" fill="#0000f4"/><circle cx="805.9" cy="566.8" r="2.3" fill="#0000f4"/><circle cx="816.0" cy="574.6" r="2.3" fill="#0000f4"/><circle cx="838.9" cy="582.5" r="2.3" fill="#0000f4"/><circle cx="834.9" cy="590.4" r="2.3" fill="#0000f4"/><circle cx="831.0" cy="598.3" r="2.3" fill="#0000f4"/><circle cx="843.8" cy="606.2" r="2.3" fill="#0000f4"/><circle cx="827.0" cy="614.0" r="2.3" fill="#0000f4"/><circle cx="846.9" cy="621.9" r="2.3" fill="#0000f4"/><circle cx="817.9" cy="629.8" r="2.3" fill="#0000f4"/><circle cx="820.7" cy="637.7" r="2.3" fill="#0000f4"/><circle cx="818.8" cy="645.6" r="2.3" fill="#0000f4"/><circle cx="825.8" cy="653.4" r="2.3" fill="#0000f4"/><circle cx="898.8" cy="661.3" r="2.3" fill="#0000f4"/><circle cx="849.0" cy="669.2" r="2.3" fill="#0000f4"/><circle cx="820.7" cy="677.1" r="2.3" fill="#0000f4"/><circle cx="818.8" cy="685.0" r="2.3" fill="#0000f4"/><circle cx="827.0" cy="692.8" r="2.3" fill="#0000f4"/><circle cx="838.0" cy="700.7" r="2.3" fill="#0000f4"/><circle cx="839.9" cy="708.6" r="2.3" fill="#0000f4"/><circle cx="828.9" cy="716.5" r="2.3" fill="#0000f4"/><circle cx="831.9" cy="724.4" r="2.3" fill="#0000f4"/><circle cx="831.9" cy="732.2" r="2.3" fill="#0000f4"/><circle cx="830.0" cy="740.1" r="2.3" fill="#0000f4"/><circle cx="838.0" cy="748.0" r="2.3" fill="#0000f4"/><circle cx="842.0" cy="755.9" r="2.3" fill="#0000f4"/><circle cx="850.9" cy="763.8" r="2.3" fill="#0000f4"/><circle cx="844.8" cy="771.6" r="2.3" fill="#0000f4"/><circle cx="842.9" cy="779.5" r="2.3" fill="#0000f4"/><circle cx="839.9" cy="787.4" r="2.3" fill="#0000f4"/><circle cx="849.0" cy="795.3" r="2.3" fill="#0000f4"/><circle cx="839.9" cy="803.2" r="2.3" fill="#0000f4"/><text x="741.7" y="84.8" font-size="14" fill="#232629" style="font-family:'DejaVu Sans','Liberation Sans',sans-serif;letter-spacing:0.029px">MCRC0247</text><text x="741.6" y="104.7" font-size="14" fill="#232629" style="font-family:'DejaVu Sans','Liberation Sans',sans-serif;letter-spacing:-0.061px">Geochem/SiO2_XRF202_pct</text></svg><div class="a" style="left:942px;top:73px;width:159px;height:792px;background:#fff"></div><svg style="left:942px;top:73px" width="159" height="792" viewBox="942 73 159 792" font-family='"DejaVu Sans Condensed","Liberation Sans",sans-serif'><defs></defs><rect x="954" y="157.0" width="90.5" height="94.2" fill="#d040f8"/><rect x="954" y="251.0" width="90.5" height="40.2" fill="#9c9c70"/><rect x="954" y="291.0" width="90.5" height="47.2" fill="#b8600c"/><rect x="954" y="338.0" width="90.5" height="40.2" fill="#8e534d"/><rect x="954" y="378.0" width="90.5" height="7.2" fill="#b8600c"/><rect x="954" y="385.0" width="90.5" height="190.2" fill="#8e534d"/><rect x="954" y="575.0" width="90.5" height="55.2" fill="#d040f8"/><rect x="954" y="630.0" width="90.5" height="31.2" fill="#8e534d"/><rect x="954" y="661.0" width="90.5" height="8.2" fill="#d4508c"/><rect x="954" y="669.0" width="90.5" height="95.2" fill="#8e534d"/><rect x="954" y="764.0" width="90.5" height="47.2" fill="#d040f8"/><clipPath id="cb0"><rect x="954" y="157.0" width="90.5" height="94.0"/></clipPath><g clip-path="url(#cb0)" fill="#1c1c1c"><circle cx="956.8" cy="169.9" r="1.2"/><circle cx="964.3" cy="169.9" r="1.2"/><circle cx="971.5" cy="169.9" r="1.2"/><circle cx="979.1" cy="169.9" r="1.2"/><circle cx="986.4" cy="169.9" r="1.2"/><circle cx="993.8" cy="169.9" r="1.2"/><circle cx="1001.3" cy="169.9" r="1.2"/><circle cx="1008.7" cy="169.9" r="1.2"/><circle cx="1016.1" cy="169.9" r="1.2"/><circle cx="1023.5" cy="169.9" r="1.2"/><circle cx="1031.0" cy="169.9" r="1.2"/><circle cx="1038.4" cy="169.9" r="1.2"/><circle cx="956.8" cy="194.9" r="1.2"/><circle cx="964.3" cy="194.9" r="1.2"/><circle cx="971.5" cy="194.9" r="1.2"/><circle cx="979.1" cy="194.9" r="1.2"/><circle cx="986.4" cy="194.9" r="1.2"/><circle cx="993.8" cy="194.9" r="1.2"/><circle cx="1001.3" cy="194.9" r="1.2"/><circle cx="1008.7" cy="194.9" r="1.2"/><circle cx="1016.1" cy="194.9" r="1.2"/><circle cx="1023.5" cy="194.9" r="1.2"/><circle cx="1031.0" cy="194.9" r="1.2"/><circle cx="1038.4" cy="194.9" r="1.2"/><circle cx="956.8" cy="219.9" r="1.2"/><circle cx="964.3" cy="219.9" r="1.2"/><circle cx="971.5" cy="219.9" r="1.2"/><circle cx="979.1" cy="219.9" r="1.2"/><circle cx="986.4" cy="219.9" r="1.2"/><circle cx="993.8" cy="219.9" r="1.2"/><circle cx="1001.3" cy="219.9" r="1.2"/><circle cx="1008.7" cy="219.9" r="1.2"/><circle cx="1016.1" cy="219.9" r="1.2"/><circle cx="1023.5" cy="219.9" r="1.2"/><circle cx="1031.0" cy="219.9" r="1.2"/><circle cx="1038.4" cy="219.9" r="1.2"/><circle cx="956.8" cy="244.9" r="1.2"/><circle cx="964.3" cy="244.9" r="1.2"/><circle cx="971.5" cy="244.9" r="1.2"/><circle cx="979.1" cy="244.9" r="1.2"/><circle cx="986.4" cy="244.9" r="1.2"/><circle cx="993.8" cy="244.9" r="1.2"/><circle cx="1001.3" cy="244.9" r="1.2"/><circle cx="1008.7" cy="244.9" r="1.2"/><circle cx="1016.1" cy="244.9" r="1.2"/><circle cx="1023.5" cy="244.9" r="1.2"/><circle cx="1031.0" cy="244.9" r="1.2"/><circle cx="1038.4" cy="244.9" r="1.2"/><circle cx="963.0" cy="175.2" r="1.2"/><circle cx="991.3" cy="174.9" r="1.2"/><circle cx="1005.2" cy="175.8" r="1.2"/><circle cx="1043.9" cy="176.1" r="1.2"/><circle cx="970.6" cy="181.3" r="1.2"/><circle cx="980.9" cy="180.1" r="1.2"/><circle cx="1012.2" cy="182.5" r="1.2"/><circle cx="1026.1" cy="180.7" r="1.2"/><circle cx="960.2" cy="185.5" r="1.2"/><circle cx="987.9" cy="185.4" r="1.2"/><circle cx="999.0" cy="184.9" r="1.2"/><circle cx="1038.0" cy="184.9" r="1.2"/><circle cx="967.0" cy="189.8" r="1.2"/><circle cx="982.3" cy="190.4" r="1.2"/><circle cx="1016.3" cy="189.6" r="1.2"/><circle cx="1027.9" cy="190.8" r="1.2"/><circle cx="967.7" cy="199.9" r="1.2"/><circle cx="976.1" cy="203.7" r="1.2"/><circle cx="986.4" cy="203.7" r="1.2"/><circle cx="1001.1" cy="203.1" r="1.2"/><circle cx="1023.5" cy="202.8" r="1.2"/><circle cx="1043.1" cy="203.0" r="1.2"/><circle cx="960.2" cy="206.4" r="1.2"/><circle cx="973.4" cy="212.2" r="1.2"/><circle cx="988.5" cy="213.4" r="1.2"/><circle cx="999.6" cy="213.1" r="1.2"/><circle cx="1015.1" cy="209.8" r="1.2"/><circle cx="1029.2" cy="212.5" r="1.2"/><circle cx="1043.9" cy="212.5" r="1.2"/><circle cx="962.3" cy="216.0" r="1.2"/><circle cx="1007.5" cy="216.0" r="1.2"/><circle cx="963.0" cy="226.5" r="1.2"/><circle cx="976.1" cy="227.1" r="1.2"/><circle cx="989.3" cy="228.6" r="1.2"/><circle cx="999.0" cy="226.5" r="1.2"/><circle cx="1026.9" cy="224.9" r="1.2"/><circle cx="1043.9" cy="227.1" r="1.2"/><circle cx="1012.2" cy="232.1" r="1.2"/><circle cx="956.2" cy="235.1" r="1.2"/><circle cx="1036.4" cy="234.8" r="1.2"/><circle cx="974.0" cy="238.1" r="1.2"/><circle cx="989.3" cy="237.7" r="1.2"/><circle cx="1003.4" cy="238.4" r="1.2"/><circle cx="1025.4" cy="236.9" r="1.2"/><circle cx="998.4" cy="249.2" r="1.2"/><circle cx="961.5" cy="159.7" r="1.2"/><circle cx="984.4" cy="160.3" r="1.2"/><circle cx="1014.3" cy="161.1" r="1.2"/><circle cx="1033.1" cy="159.7" r="1.2"/><circle cx="968.5" cy="164.0" r="1.2"/><circle cx="991.3" cy="164.6" r="1.2"/><circle cx="1003.4" cy="164.0" r="1.2"/><circle cx="1025.4" cy="163.4" r="1.2"/></g><clipPath id="cb6"><rect x="954" y="575.0" width="90.5" height="55.0"/></clipPath><g clip-path="url(#cb6)" fill="#1c1c1c"><circle cx="956.8" cy="594.9" r="1.2"/><circle cx="964.3" cy="594.9" r="1.2"/><circle cx="971.5" cy="594.9" r="1.2"/><circle cx="979.1" cy="594.9" r="1.2"/><circle cx="986.4" cy="594.9" r="1.2"/><circle cx="993.8" cy="594.9" r="1.2"/><circle cx="1001.3" cy="594.9" r="1.2"/><circle cx="1008.7" cy="594.9" r="1.2"/><circle cx="1016.1" cy="594.9" r="1.2"/><circle cx="1023.5" cy="594.9" r="1.2"/><circle cx="1031.0" cy="594.9" r="1.2"/><circle cx="1038.4" cy="594.9" r="1.2"/><circle cx="956.8" cy="619.9" r="1.2"/><circle cx="964.3" cy="619.9" r="1.2"/><circle cx="971.5" cy="619.9" r="1.2"/><circle cx="979.1" cy="619.9" r="1.2"/><circle cx="986.4" cy="619.9" r="1.2"/><circle cx="993.8" cy="619.9" r="1.2"/><circle cx="1001.3" cy="619.9" r="1.2"/><circle cx="1008.7" cy="619.9" r="1.2"/><circle cx="1016.1" cy="619.9" r="1.2"/><circle cx="1023.5" cy="619.9" r="1.2"/><circle cx="1031.0" cy="619.9" r="1.2"/><circle cx="1038.4" cy="619.9" r="1.2"/><circle cx="963.0" cy="575.2" r="1.2"/><circle cx="991.3" cy="574.9" r="1.2"/><circle cx="1005.2" cy="575.8" r="1.2"/><circle cx="1043.9" cy="576.1" r="1.2"/><circle cx="970.6" cy="581.3" r="1.2"/><circle cx="980.9" cy="580.1" r="1.2"/><circle cx="1012.2" cy="582.5" r="1.2"/><circle cx="1026.1" cy="580.7" r="1.2"/><circle cx="960.2" cy="585.5" r="1.2"/><circle cx="987.9" cy="585.4" r="1.2"/><circle cx="999.0" cy="584.9" r="1.2"/><circle cx="1038.0" cy="584.9" r="1.2"/><circle cx="967.0" cy="589.8" r="1.2"/><circle cx="982.3" cy="590.4" r="1.2"/><circle cx="1016.3" cy="589.6" r="1.2"/><circle cx="1027.9" cy="590.8" r="1.2"/><circle cx="967.7" cy="599.9" r="1.2"/><circle cx="976.1" cy="603.7" r="1.2"/><circle cx="986.4" cy="603.7" r="1.2"/><circle cx="1001.1" cy="603.1" r="1.2"/><circle cx="1023.5" cy="602.8" r="1.2"/><circle cx="1043.1" cy="603.0" r="1.2"/><circle cx="960.2" cy="606.4" r="1.2"/><circle cx="973.4" cy="612.2" r="1.2"/><circle cx="988.5" cy="613.4" r="1.2"/><circle cx="999.6" cy="613.1" r="1.2"/><circle cx="1015.1" cy="609.8" r="1.2"/><circle cx="1029.2" cy="612.5" r="1.2"/><circle cx="1043.9" cy="612.5" r="1.2"/><circle cx="962.3" cy="616.0" r="1.2"/><circle cx="1007.5" cy="616.0" r="1.2"/><circle cx="963.0" cy="626.5" r="1.2"/><circle cx="976.1" cy="627.1" r="1.2"/><circle cx="989.3" cy="628.6" r="1.2"/><circle cx="999.0" cy="626.5" r="1.2"/><circle cx="1026.9" cy="624.9" r="1.2"/><circle cx="1043.9" cy="627.1" r="1.2"/></g><clipPath id="cb10"><rect x="954" y="764.0" width="90.5" height="47.0"/></clipPath><g clip-path="url(#cb10)" fill="#1c1c1c"><circle cx="956.8" cy="769.9" r="1.2"/><circle cx="964.3" cy="769.9" r="1.2"/><circle cx="971.5" cy="769.9" r="1.2"/><circle cx="979.1" cy="769.9" r="1.2"/><circle cx="986.4" cy="769.9" r="1.2"/><circle cx="993.8" cy="769.9" r="1.2"/><circle cx="1001.3" cy="769.9" r="1.2"/><circle cx="1008.7" cy="769.9" r="1.2"/><circle cx="1016.1" cy="769.9" r="1.2"/><circle cx="1023.5" cy="769.9" r="1.2"/><circle cx="1031.0" cy="769.9" r="1.2"/><circle cx="1038.4" cy="769.9" r="1.2"/><circle cx="956.8" cy="794.9" r="1.2"/><circle cx="964.3" cy="794.9" r="1.2"/><circle cx="971.5" cy="794.9" r="1.2"/><circle cx="979.1" cy="794.9" r="1.2"/><circle cx="986.4" cy="794.9" r="1.2"/><circle cx="993.8" cy="794.9" r="1.2"/><circle cx="1001.3" cy="794.9" r="1.2"/><circle cx="1008.7" cy="794.9" r="1.2"/><circle cx="1016.1" cy="794.9" r="1.2"/><circle cx="1023.5" cy="794.9" r="1.2"/><circle cx="1031.0" cy="794.9" r="1.2"/><circle cx="1038.4" cy="794.9" r="1.2"/><circle cx="963.0" cy="775.2" r="1.2"/><circle cx="991.3" cy="774.9" r="1.2"/><circle cx="1005.2" cy="775.8" r="1.2"/><circle cx="1043.9" cy="776.1" r="1.2"/><circle cx="970.6" cy="781.3" r="1.2"/><circle cx="980.9" cy="780.1" r="1.2"/><circle cx="1012.2" cy="782.5" r="1.2"/><circle cx="1026.1" cy="780.7" r="1.2"/><circle cx="960.2" cy="785.5" r="1.2"/><circle cx="987.9" cy="785.4" r="1.2"/><circle cx="999.0" cy="784.9" r="1.2"/><circle cx="1038.0" cy="784.9" r="1.2"/><circle cx="967.0" cy="789.8" r="1.2"/><circle cx="982.3" cy="790.4" r="1.2"/><circle cx="1016.3" cy="789.6" r="1.2"/><circle cx="1027.9" cy="790.8" r="1.2"/><circle cx="967.7" cy="799.9" r="1.2"/><circle cx="976.1" cy="803.7" r="1.2"/><circle cx="986.4" cy="803.7" r="1.2"/><circle cx="1001.1" cy="803.1" r="1.2"/><circle cx="1023.5" cy="802.8" r="1.2"/><circle cx="1043.1" cy="803.0" r="1.2"/><circle cx="960.2" cy="806.4" r="1.2"/><circle cx="973.4" cy="812.2" r="1.2"/><circle cx="1015.1" cy="809.8" r="1.2"/><circle cx="968.5" cy="764.0" r="1.2"/><circle cx="991.3" cy="764.6" r="1.2"/><circle cx="1003.4" cy="764.0" r="1.2"/><circle cx="1025.4" cy="763.4" r="1.2"/></g><clipPath id="cshl"><rect x="954" y="251.0" width="90.5" height="40.0"/></clipPath><g clip-path="url(#cshl)"><path d="M954 257.7 H1044.5 M954 272.3 H1044.5 M954 285.2 H1044.5 M997.3 250.9 V257.7 M978.4 257.7 V272.3 M1028.4 257.7 V272.3 M1000.3 272.3 V285.2 M975.9 285.2 V291.1 M1022.9 285.2 V291.1 " stroke="#26261c" stroke-width="0.95" fill="none"/><circle cx="973.7" cy="250.3" r="3.6" fill="none" stroke="#26261c" stroke-width="0.95"/><circle cx="1024.2" cy="250.3" r="3.6" fill="none" stroke="#26261c" stroke-width="0.95"/><circle cx="957.4" cy="265.0" r="3.6" fill="none" stroke="#26261c" stroke-width="0.95"/><circle cx="1004.0" cy="265.0" r="3.6" fill="none" stroke="#26261c" stroke-width="0.95"/><circle cx="976.4" cy="278.8" r="3.6" fill="none" stroke="#26261c" stroke-width="0.95"/><circle cx="1028.4" cy="278.8" r="3.6" fill="none" stroke="#26261c" stroke-width="0.95"/><circle cx="955.2" cy="291.6" r="3.6" fill="none" stroke="#26261c" stroke-width="0.95"/><circle cx="999.6" cy="291.3" r="3.6" fill="none" stroke="#26261c" stroke-width="0.95"/></g><clipPath id="cshf"><rect x="954" y="291.0" width="90.5" height="47.0"/></clipPath><g clip-path="url(#cshf)"><path d="M954 297.6 H1044.5 M954 312.3 H1044.5 M954 327.5 H1044.5 M975.9 291.1 V297.6 M1022.9 291.1 V297.6 M998.1 297.6 V312.3 M980.5 312.3 V327.5 M1029.5 312.3 V327.5 M1000.3 327.5 V338.1 M960.9 304.4 H987.8 M954.1 319.9 H970.3 M1040.8 319.9 H1046.1 M1014.3 335.1 H1040.8 M986.2 291.6 H1012.8 " stroke="#30200c" stroke-width="0.95" fill="none"/><circle cx="1015.1" cy="304.9" r="1.1" fill="#241606"/><circle cx="1027.5" cy="304.9" r="1.1" fill="#241606"/><circle cx="1038.0" cy="304.9" r="1.1" fill="#241606"/><circle cx="993.1" cy="320.1" r="1.1" fill="#241606"/><circle cx="1004.7" cy="320.1" r="1.1" fill="#241606"/><circle cx="1016.0" cy="320.1" r="1.1" fill="#241606"/><circle cx="965.0" cy="335.1" r="1.1" fill="#241606"/><circle cx="976.4" cy="335.1" r="1.1" fill="#241606"/><circle cx="987.3" cy="335.1" r="1.1" fill="#241606"/><circle cx="961.2" cy="291.7" r="1.1" fill="#241606"/><circle cx="1035.5" cy="291.7" r="1.1" fill="#241606"/></g><path d="M971.1 378.1 V384.9 M1018.8 378.1 V384.9 M980.9 379.6 H1007.8 " stroke="#30200c" stroke-width="1" fill="none"/><circle cx="960.5" cy="380.3" r="1.1" fill="#241606"/><circle cx="1034.8" cy="380.3" r="1.1" fill="#241606"/><path d="M957.4 661.0 V664.4 Q956.8 667.4 954.0 669.0 M957.4 664.4 Q958.0 667.4 960.8 669.0" stroke="#241018" stroke-width="1.15" fill="none"/><path d="M1006.0 661.0 V664.4 Q1005.4 667.4 1002.6 669.0 M1006.0 664.4 Q1006.6 667.4 1009.4 669.0" stroke="#241018" stroke-width="1.15" fill="none"/><rect x="1045.3" y="157.0" width="45.40000000000009" height="654.0" fill="#808080" stroke="#000" stroke-width="2"/><rect x="1045.3" y="250.0" width="45.40000000000009" height="2" fill="#000"/><rect x="1045.3" y="290.0" width="45.40000000000009" height="2" fill="#000"/><rect x="1045.3" y="337.0" width="45.40000000000009" height="2" fill="#000"/><rect x="1045.3" y="377.0" width="45.40000000000009" height="2" fill="#000"/><rect x="1045.3" y="384.0" width="45.40000000000009" height="2" fill="#000"/><rect x="1045.3" y="574.0" width="45.40000000000009" height="2" fill="#000"/><rect x="1045.3" y="629.0" width="45.40000000000009" height="2" fill="#000"/><rect x="1045.3" y="660.0" width="45.40000000000009" height="2" fill="#000"/><rect x="1045.3" y="668.0" width="45.40000000000009" height="2" fill="#000"/><rect x="1045.3" y="763.0" width="45.40000000000009" height="2" fill="#000"/><clipPath id="cg0"><rect x="1046.3" y="158.0" width="43.40000000000009" height="92.0"/></clipPath><text x="1048.6" y="209.9" font-size="12.6" fill="#141618" style="font-family:'DejaVu Sans','Liberation Sans',sans-serif;letter-spacing:0.895px" clip-path="url(#cg0)">BIF</text><clipPath id="cg1"><rect x="1046.3" y="252.0" width="43.40000000000009" height="38.0"/></clipPath><text x="1048.6" y="276.9" font-size="12.6" fill="#141618" style="font-family:'DejaVu Sans','Liberation Sans',sans-serif;letter-spacing:0.358px" clip-path="url(#cg1)">SHL</text><clipPath id="cg2"><rect x="1046.3" y="292.0" width="43.40000000000009" height="45.0"/></clipPath><text x="1048.6" y="320.4" font-size="12.6" fill="#141618" style="font-family:'DejaVu Sans','Liberation Sans',sans-serif;letter-spacing:0.441px" clip-path="url(#cg2)">SHF</text><clipPath id="cg3"><rect x="1046.3" y="339.0" width="43.40000000000009" height="38.0"/></clipPath><text x="1048.6" y="363.9" font-size="12.6" fill="#141618" style="font-family:'DejaVu Sans','Liberation Sans',sans-serif;letter-spacing:0.522px" clip-path="url(#cg3)">GOH</text><clipPath id="cg4"><rect x="1046.3" y="379.0" width="43.40000000000009" height="5.0"/></clipPath><text x="1048.6" y="387.4" font-size="12.6" fill="#141618" style="font-family:'DejaVu Sans','Liberation Sans',sans-serif;letter-spacing:0.441px" clip-path="url(#cg4)">SHF</text><clipPath id="cg5"><rect x="1046.3" y="386.0" width="43.40000000000009" height="188.0"/></clipPath><text x="1048.6" y="485.9" font-size="12.6" fill="#141618" style="font-family:'DejaVu Sans','Liberation Sans',sans-serif;letter-spacing:0.522px" clip-path="url(#cg5)">GOH</text><clipPath id="cg6"><rect x="1046.3" y="576.0" width="43.40000000000009" height="53.0"/></clipPath><text x="1048.6" y="608.4" font-size="12.6" fill="#141618" style="font-family:'DejaVu Sans','Liberation Sans',sans-serif;letter-spacing:0.895px" clip-path="url(#cg6)">BIF</text><clipPath id="cg7"><rect x="1046.3" y="631.0" width="43.40000000000009" height="29.0"/></clipPath><text x="1048.6" y="651.4" font-size="12.6" fill="#141618" style="font-family:'DejaVu Sans','Liberation Sans',sans-serif;letter-spacing:0.522px" clip-path="url(#cg7)">GOH</text><clipPath id="cg8"><rect x="1046.3" y="662.0" width="43.40000000000009" height="6.0"/></clipPath><text x="1048.6" y="670.9" font-size="12.6" fill="#141618" style="font-family:'DejaVu Sans','Liberation Sans',sans-serif;letter-spacing:0.516px" clip-path="url(#cg8)">CHT</text><clipPath id="cg9"><rect x="1046.3" y="670.0" width="43.40000000000009" height="93.0"/></clipPath><text x="1048.6" y="722.4" font-size="12.6" fill="#141618" style="font-family:'DejaVu Sans','Liberation Sans',sans-serif;letter-spacing:0.522px" clip-path="url(#cg9)">GOH</text><clipPath id="cg10"><rect x="1046.3" y="765.0" width="43.40000000000009" height="45.0"/></clipPath><text x="1048.6" y="793.4" font-size="12.6" fill="#141618" style="font-family:'DejaVu Sans','Liberation Sans',sans-serif;letter-spacing:0.895px" clip-path="url(#cg10)">BIF</text><rect x="943" y="124" width="158" height="1" fill="#8a8d90"/><rect x="943" y="844" width="158" height="1" fill="#8a8d90"/><text x="946.8" y="84.8" font-size="14" fill="#232629" style="font-family:'DejaVu Sans','Liberation Sans',sans-serif;letter-spacing:0.029px">MCRC0247</text><text x="946.8" y="104.7" font-size="14" fill="#232629" style="font-family:'DejaVu Sans','Liberation Sans',sans-serif;letter-spacing:0.14px">Geology/LITH1_CODE</text></svg>
</body></html>
